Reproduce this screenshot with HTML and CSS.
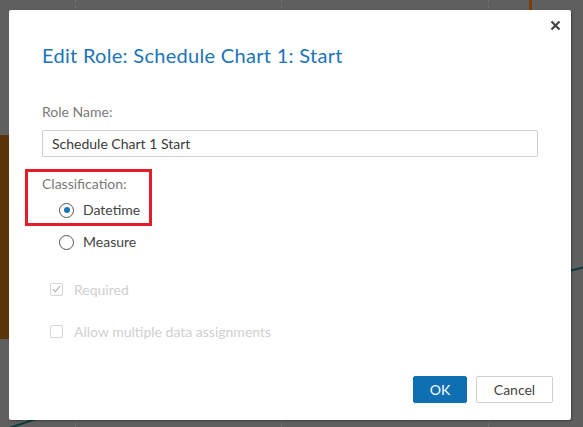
FILE: index.html
```html
<!doctype html>
<html lang="en">
  <head>
    <meta charset="UTF-8" />
    <title>Edit Role</title>
    <link rel="stylesheet" href="styles.css">
  </head>
  <body>
    <div class="backdrop">
      <span class="grid-line line-a"></span>
      <span class="grid-line line-b"></span>
      <span class="grid-line line-c"></span>
      <span class="bar-orange"></span>
      <span class="bar-brown"></span>
      <span class="trace trace-right"></span>
      <span class="trace trace-left"></span>
    </div>

    <section class="dialog" role="dialog" aria-labelledby="dialogTitle">
      <button class="close-button" aria-label="Close">
        <svg width="11" height="11" viewBox="0 0 11 11">
          <path d="M1.5 1.5 L9.5 9.5 M9.5 1.5 L1.5 9.5" stroke="#444" stroke-width="2.2" />
        </svg>
      </button>

      <h1 class="dialog-title" id="dialogTitle">Edit Role: Schedule Chart 1: Start</h1>

      <div class="dialog-body">
        <label class="field-label" for="roleName">Role Name:</label>
        <input class="text-input" id="roleName" type="text" value="Schedule Chart 1 Start" />

        <div class="classification">
          <div class="field-label">Classification:</div>
          <label class="radio-row">
            <span class="radio checked"></span>
            Datetime
          </label>
        </div>
        <label class="radio-row">
          <span class="radio"></span>
          Measure
        </label>

        <label class="check-row disabled">
          <span class="checkbox">
            <svg width="9" height="8" viewBox="0 0 9 8">
              <path d="M1 4.2 L3.4 6.6 L8 1.2" fill="none" stroke="#b8b8b8" stroke-width="1.3" />
            </svg>
          </span>
          Required
        </label>
        <label class="check-row disabled">
          <span class="checkbox"></span>
          Allow multiple data assignments
        </label>
      </div>

      <footer class="dialog-footer">
        <button class="btn btn-primary">OK</button>
        <button class="btn btn-secondary">Cancel</button>
      </footer>
    </section>
  </body>
</html>
```

FILE: styles.css
```css
* {
  margin: 0;
  padding: 0;
  box-sizing: border-box;
}

html,
body {
  height: 100%;
  overflow: hidden;
}

body {
  background: #5f5f5f;
  font-family: "Lato", "Liberation Sans", sans-serif;
  padding: 10px 12px 7px 9px;
  position: relative;
}

/* dimmed canvas behind the dialog */
.backdrop {
  position: absolute;
  inset: 0;
}

.grid-line {
  position: absolute;
  top: 0;
  bottom: 0;
  border-left: 1px dashed #6e6e6e;
}

.line-a { left: 75px; }
.line-b { left: 281px; }
.line-c { left: 488px; }

.bar-orange {
  position: absolute;
  left: 529px;
  top: 0;
  width: 3px;
  height: 12px;
  background: #7a3d07;
}

.bar-brown {
  position: absolute;
  left: 0;
  top: 135px;
  width: 10px;
  height: 204px;
  background: #5a3309;
}

.trace {
  position: absolute;
  height: 2px;
  background: #0e3b3d;
}

.trace-right {
  left: 570px;
  top: 268px;
  width: 14px;
  transform: rotate(-14deg);
}

.trace-left {
  left: 6px;
  top: 423px;
  width: 30px;
  transform: rotate(-18deg);
}

.dialog {
  position: relative;
  height: 410px;
  background: #fff;
  border-radius: 2px;
  box-shadow: 1px 1px 2px rgba(0, 0, 0, 0.35);
  display: flex;
  flex-direction: column;
  padding: 0 33px;
}

.close-button {
  position: absolute;
  top: 9px;
  right: 9px;
  width: 13px;
  height: 13px;
  border: none;
  background: none;
  display: flex;
  align-items: center;
  justify-content: center;
}

.dialog-title {
  margin-top: 33px;
  font-size: 20px;
  line-height: 24px;
  letter-spacing: 0.3px;
  font-weight: 400;
  color: #1a74ba;
}

.dialog-body {
  display: flex;
  flex-direction: column;
  margin-top: 36px;
  flex: 1;
}

.field-label {
  font-size: 14px;
  line-height: 18px;
  color: #7a7a7a;
}

.text-input {
  margin-top: 9px;
  height: 27px;
  width: 100%;
  border: 1px solid #cfcfcf;
  border-radius: 2px;
  padding: 0 9px;
  font-family: inherit;
  font-size: 14px;
  color: #3a3a3a;
}

.classification {
  margin: 12px 0 0 -17px;
  width: 127px;
  border: 3px solid #e31e26;
  padding: 3px 0 1px 14px;
}

.radio-row {
  display: flex;
  align-items: center;
  gap: 9px;
  padding-left: 17px;
  font-size: 14px;
  line-height: 18px;
  color: #444;
  height: 32px;
}

.classification .radio-row {
  height: 24px;
  margin-top: 5px;
}

.radio {
  width: 15px;
  height: 15px;
  border: 1px solid #555;
  border-radius: 50%;
  display: flex;
  align-items: center;
  justify-content: center;
}

.radio.checked::after {
  content: "";
  width: 6px;
  height: 6px;
  border-radius: 50%;
  background: #1a74ba;
}

.check-row {
  display: flex;
  align-items: center;
  gap: 11px;
  padding-left: 8px;
  font-size: 14px;
  color: #cfcfcf;
  height: 18px;
  margin-top: 22px;
}

.check-row + .check-row {
  margin-top: 24px;
}

.checkbox {
  width: 13px;
  height: 13px;
  border: 1px solid #d6d6d6;
  border-radius: 2px;
  display: flex;
  align-items: center;
  justify-content: center;
}

.dialog-footer {
  display: flex;
  justify-content: flex-end;
  gap: 9px;
  margin-right: -15px;
  margin-bottom: 17px;
}

.btn {
  height: 27px;
  border-radius: 2px;
  font-family: inherit;
  font-size: 14px;
}

.btn-primary {
  width: 54px;
  background: #0f6fb3;
  border: 1px solid #0f6fb3;
  color: #fff;
}

.btn-secondary {
  width: 77px;
  background: #fff;
  border: 1px solid #cfcfcf;
  color: #444;
}
```
